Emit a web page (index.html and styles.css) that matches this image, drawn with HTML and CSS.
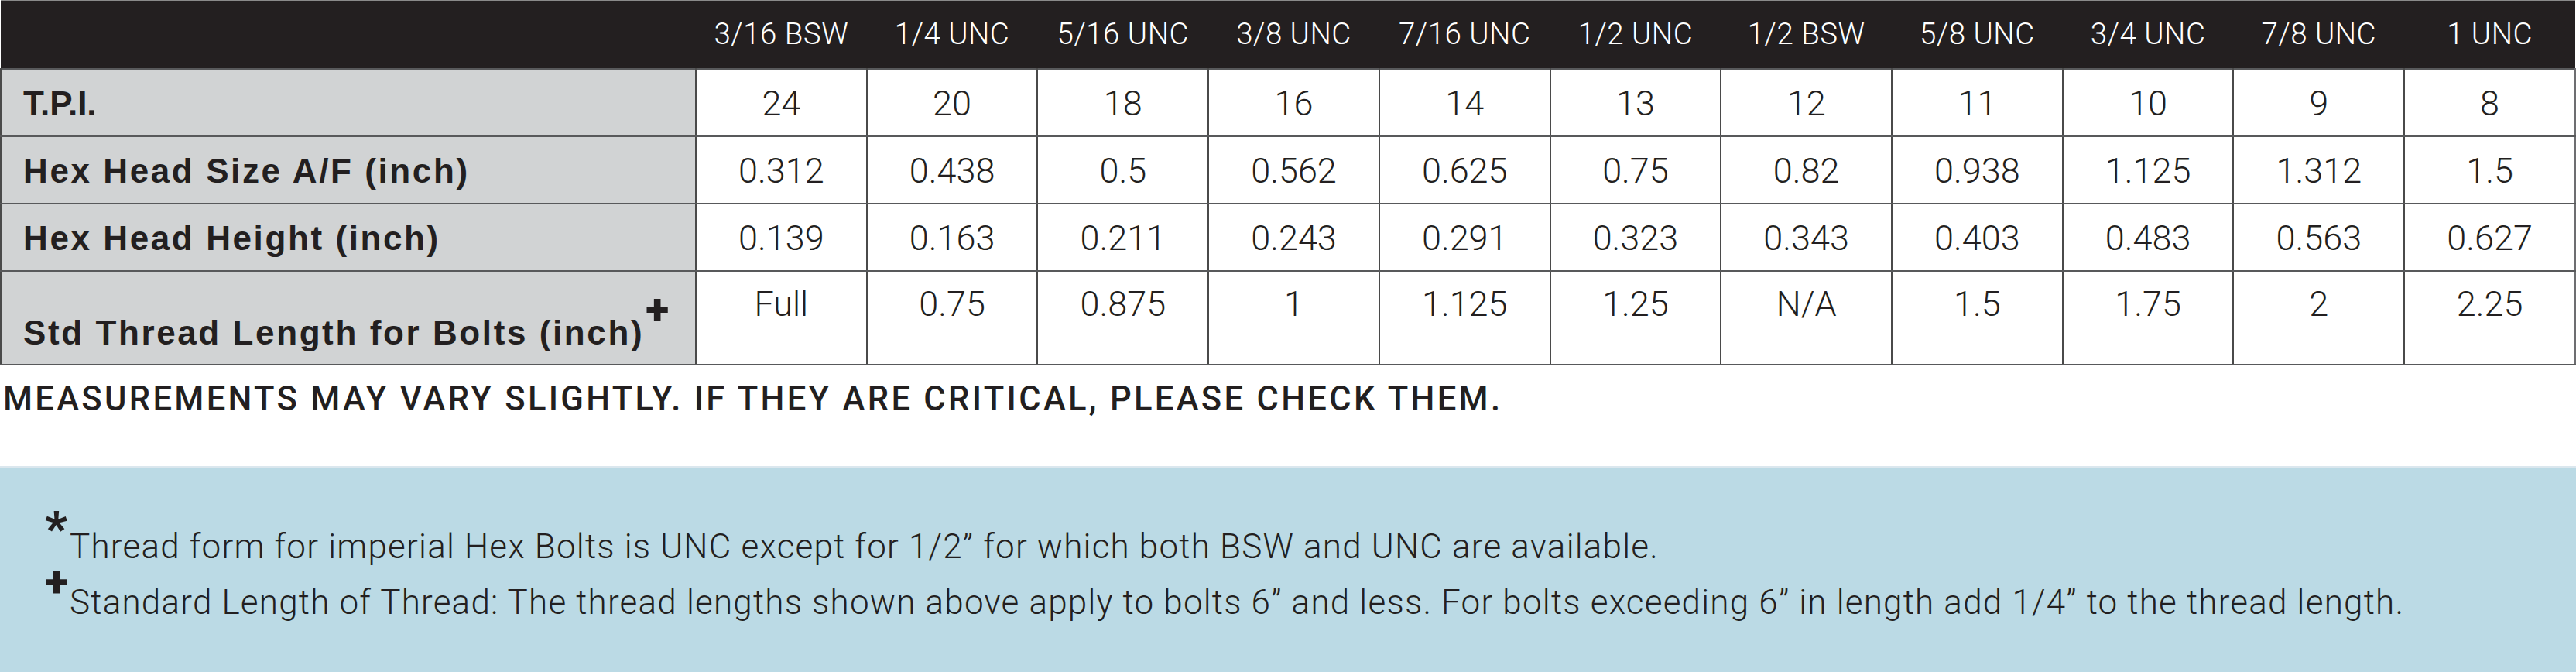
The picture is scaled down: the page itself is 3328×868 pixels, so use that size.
FILE: index.html
```html
<!DOCTYPE html>
<html lang="en">
<head>
<meta charset="utf-8">
<title>Imperial Hex Bolt Dimensions</title>
<link rel="stylesheet" href="styles.css">
</head>
<body>
<table class="spec">
  <colgroup>
    <col class="col-label">
    <col span="11" class="col-size">
  </colgroup>
  <thead>
    <tr class="row-head">
      <th class="corner"></th>
      <th>3/16 BSW</th><th>1/4 UNC</th><th>5/16 UNC</th><th>3/8 UNC</th><th>7/16 UNC</th><th>1/2 UNC</th><th>1/2 BSW</th><th>5/8 UNC</th><th>3/4 UNC</th><th>7/8 UNC</th><th>1 UNC</th>
    </tr>
  </thead>
  <tbody>
    <tr class="row-std">
      <th class="label-abbr">T.P.I.</th>
      <td>24</td><td>20</td><td>18</td><td>16</td><td>14</td><td>13</td><td>12</td><td>11</td><td>10</td><td>9</td><td>8</td>
    </tr>
    <tr class="row-std">
      <th>Hex Head Size A/F (inch)</th>
      <td>0.312</td><td>0.438</td><td>0.5</td><td>0.562</td><td>0.625</td><td>0.75</td><td>0.82</td><td>0.938</td><td>1.125</td><td>1.312</td><td>1.5</td>
    </tr>
    <tr class="row-std">
      <th>Hex Head Height (inch)</th>
      <td>0.139</td><td>0.163</td><td>0.211</td><td>0.243</td><td>0.291</td><td>0.323</td><td>0.343</td><td>0.403</td><td>0.483</td><td>0.563</td><td>0.627</td>
    </tr>
    <tr class="row-tall">
      <th>Std Thread Length for Bolts (inch)<sup class="mark">+</sup></th>
      <td>Full</td><td>0.75</td><td>0.875</td><td>1</td><td>1.125</td><td>1.25</td><td>N/A</td><td>1.5</td><td>1.75</td><td>2</td><td>2.25</td>
    </tr>
  </tbody>
</table>
<p class="caution">MEASUREMENTS MAY VARY SLIGHTLY. IF THEY ARE CRITICAL, PLEASE CHECK THEM.</p>
<section class="notes">
  <p class="note"><sup class="note-mark note-star">*</sup>Thread form for imperial Hex Bolts is UNC except for 1/2” for which both BSW and UNC are available.</p>
  <p class="note"><sup class="note-mark note-plus">+</sup>Standard Length of Thread: The thread lengths shown above apply to bolts 6” and less. For bolts exceeding 6” in length add 1/4” to the thread length.</p>
</section>
</body>
</html>
```

FILE: styles.css
```css
html, body {
  margin: 0;
  padding: 0;
  background: #ffffff;
}

body {
  width: 3328px;
  color: #231f20;
  font-family: Roboto, "Liberation Sans", Arial, sans-serif;
}

.spec {
  width: 3328px;
  table-layout: fixed;
  border-collapse: collapse;
  border-spacing: 0;
}

.col-label { width: 898px; }

.spec th,
.spec td {
  padding: 0;
  text-align: center;
  vertical-align: middle;
}

.spec .row-head {
  height: 88px;
  background: #231f20;
}

.spec .row-head th {
  color: #ffffff;
  font-weight: 300;
  font-size: 38.5px;
  line-height: 46px;
  letter-spacing: 0.5px;
  border-top: 1px solid #8a8a8a;
}

.spec tbody td {
  font-weight: 300;
  font-size: 45px;
  line-height: 54px;
  border: 2px solid #4a4a4a;
  border-top-color: #58595b;
  border-bottom-color: #58595b;
  padding-top: 4px;
}

.spec tbody th {
  background: #d1d3d4;
  text-align: left;
  font-family: "Liberation Sans", Arial, sans-serif;
  font-weight: 700;
  font-size: 44px;
  line-height: 50px;
  letter-spacing: 2.6px;
  padding-left: 28px;
  padding-top: 4px;
  border: 2px solid #4a4a4a;
  border-top-color: #58595b;
  border-bottom-color: #58595b;
}

.spec tbody th.label-abbr { letter-spacing: 0; }

.spec tbody td:last-child { border-right-color: #6d6e71; }

.spec .row-std { height: 87px; }

.spec .row-tall { height: 121px; }

.spec .row-tall td {
  vertical-align: top;
  padding-top: 15px;
}

.spec .row-tall th {
  vertical-align: bottom;
  padding-top: 0;
  padding-bottom: 15px;
}

.mark {
  font-family: Roboto, sans-serif;
  font-weight: 900;
  font-size: 56px;
  line-height: 0;
  letter-spacing: 0;
  vertical-align: 26px;
  margin-left: 2px;
}

.caution {
  margin: 18px 0 0 4px;
  font-weight: 500;
  font-size: 43.5px;
  line-height: 52px;
  letter-spacing: 3.3px;
}

.notes {
  margin-top: 60px;
  height: 268px;
  box-sizing: border-box;
  background: #bbdae5;
  border-top: 2px solid #dbe7ee;
  padding: 66px 0 0 58px;
}

.note {
  margin: 0;
  font-weight: 300;
  font-size: 44px;
  line-height: 72px;
  letter-spacing: 1.2px;
}

.note-mark {
  display: inline-block;
  width: 32px;
  font-weight: 900;
  line-height: 0;
  letter-spacing: 0;
}

.note-star {
  font-size: 62px;
  vertical-align: 17px;
}

.note-plus {
  font-size: 56px;
  vertical-align: 22px;
}
```
